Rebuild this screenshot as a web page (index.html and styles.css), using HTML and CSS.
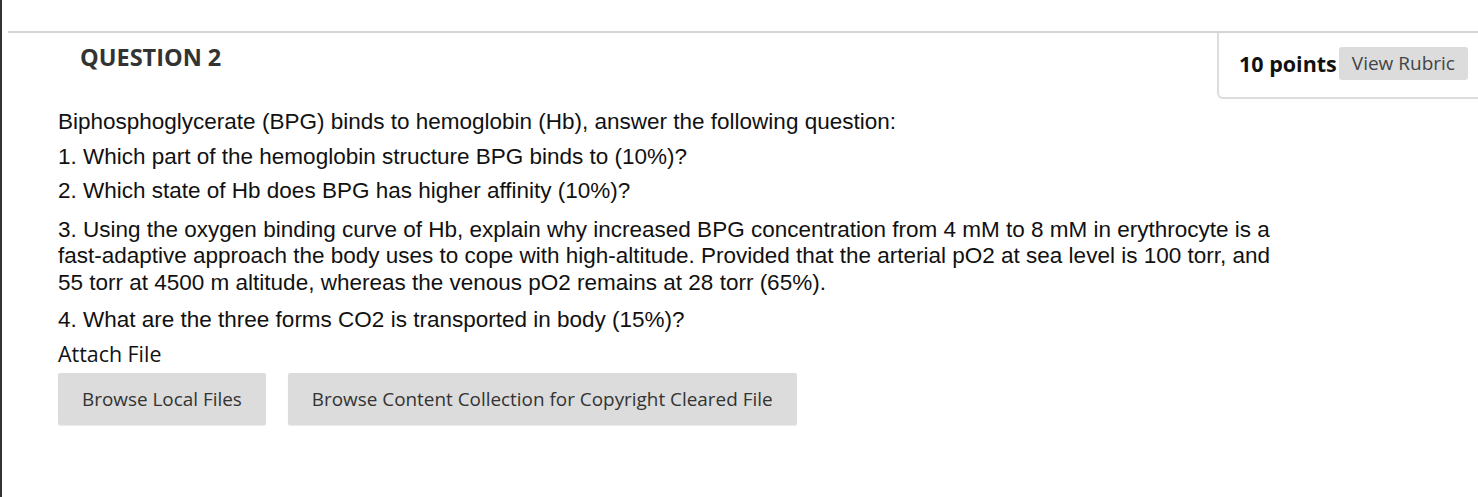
FILE: index.html
```html
<!DOCTYPE html>
<html>
<head>
<meta charset="utf-8">
<link rel="stylesheet" href="styles.css">
</head>
<body>
<div class="frame">
  <div class="top-gap"></div>
  <section class="question">
    <header class="q-header">
      <h2 class="q-title">QUESTION 2</h2>
      <div class="points-box">
        <span class="points">10 points</span>
        <button class="rubric">View Rubric</button>
      </div>
    </header>
    <div class="q-body">
      <p class="para">Biphosphoglycerate (BPG) binds to hemoglobin (Hb), answer the following question:</p>
      <p class="para">1. Which part of the hemoglobin structure BPG binds to (10%)?</p>
      <p class="para">2. Which state of Hb does BPG has higher affinity (10%)?</p>
      <p class="para long">3. Using the oxygen binding curve of Hb, explain why increased BPG concentration from 4 mM to 8 mM in erythrocyte is a fast-adaptive approach the body uses to cope with high-altitude. Provided that the arterial pO2 at sea level is 100 torr, and 55 torr at 4500 m altitude, whereas the venous pO2 remains at 28 torr (65%).</p>
      <p class="para last">4. What are the three forms CO2 is transported in body (15%)?</p>
      <div class="attach-label">Attach File</div>
      <div class="attach-buttons">
        <button class="btn">Browse Local Files</button>
        <button class="btn">Browse Content Collection for Copyright Cleared File</button>
      </div>
    </div>
  </section>
</div>
</body>
</html>
```
FILE: styles.css
```css
html, body {
  margin: 0;
  padding: 0;
  background: #fff;
}
body {
  width: 1478px;
  height: 497px;
  overflow: hidden;
}
.frame {
  height: 497px;
  border-left: 2px solid #333;
  box-sizing: border-box;
}
.top-gap {
  height: 31px;
}
.question {
  margin-left: 6px;
  border-top: 2px solid #d4d4d4;
}
.q-header {
  display: flex;
  justify-content: space-between;
  align-items: flex-start;
}
.q-title {
  margin: 0;
  padding: 9px 0 0 72px;
  font-family: "Open Sans", sans-serif;
  font-weight: 700;
  font-size: 23.5px;
  color: #333;
  line-height: 30px;
}
.points-box {
  display: flex;
  align-items: center;
  white-space: nowrap;
  padding: 14px 13px 17px 20px;
  border-left: 2px solid #ddd;
  border-bottom: 2px solid #ddd;
  border-bottom-left-radius: 6px;
  width: 261px;
  box-sizing: border-box;
}
.points {
  font-family: "Open Sans", sans-serif;
  font-weight: 700;
  font-size: 21.5px;
  color: #111;
}
.rubric {
  margin-left: 2px;
  border: none;
  border-radius: 3px;
  background: #dcdcdc;
  color: #444;
  font-family: "Open Sans", sans-serif;
  font-size: 19px;
  padding: 3px 13px;
  line-height: 27px;
  white-space: nowrap;
}
.q-body {
  padding: 0 0 0 50px;
  margin-top: 10px;
  width: 1230px;
}
.para {
  margin: 0 0 8px;
  font-family: "Liberation Sans", Arial, sans-serif;
  font-size: 22.5px;
  line-height: 26.5px;
  color: #111;
}
.para.long {
  margin-top: 12px;
  margin-bottom: 11px;
}
.para.last {
  margin-bottom: 5px;
}
.attach-label {
  font-family: "Open Sans", sans-serif;
  font-size: 21.4px;
  color: #111;
  line-height: 30px;
}
.attach-buttons {
  display: flex;
  gap: 22px;
  margin-top: 4px;
}
.btn {
  border: none;
  border-radius: 2px;
  background: #dcdcdc;
  color: #333;
  font-family: "Open Sans", sans-serif;
  font-size: 18.9px;
  height: 52px;
  padding: 0 24px;
  box-shadow: 0 1px 1px rgba(0,0,0,0.08);
}
```
